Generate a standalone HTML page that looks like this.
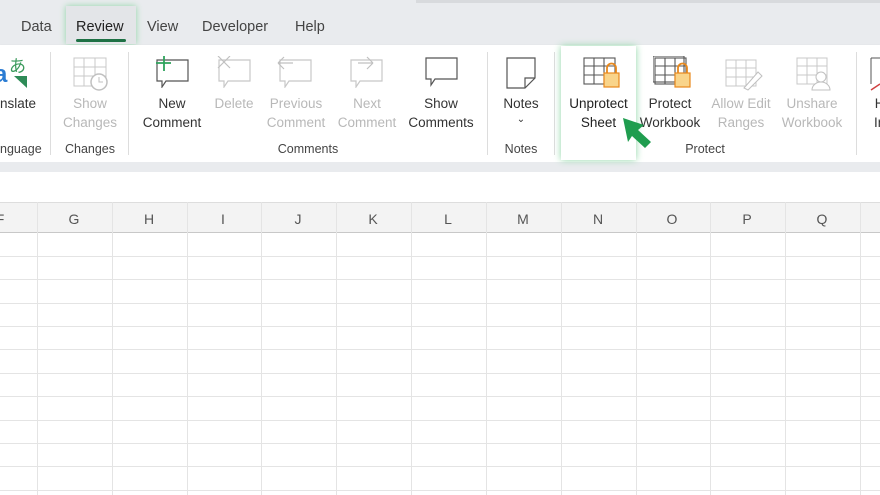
<!DOCTYPE html>
<html><head><style>
*{margin:0;padding:0;box-sizing:border-box}
body{width:880px;height:495px;overflow:hidden;background:#fff;font-family:"Liberation Sans",sans-serif;position:relative}
.top{position:absolute;left:0;top:0;width:880px;height:45px;background:#e9ebee}
.tab{position:absolute;top:19px;font-size:14.5px;color:#444}
.rib{position:absolute;left:0;top:45px;width:880px;height:117px;background:#fff;box-shadow:0 1px 2px #ccc}
.band{position:absolute;left:0;top:162px;width:880px;height:10px;background:#e9ebee}
.lbl{position:absolute;font-size:13.5px;color:#333;text-align:center;line-height:19px;white-space:nowrap}
.dis{color:#b8b8b8}
.grp{position:absolute;top:142px;font-size:12.5px;color:#444;text-align:center;white-space:nowrap}
.sep{position:absolute;top:52px;width:1px;height:103px;background:#ddd}
svg{position:absolute}
.hdr{position:absolute;left:0;top:202px;width:880px;height:31px;background:#f3f3f3;border-top:1px solid #ddd;border-bottom:1px solid #c8c8c8}
.col{position:absolute;top:211px;font-size:14px;color:#555;width:20px;text-align:center;margin-left:-10px}
</style></head><body>
<div class="top"></div>
<div style="position:absolute;left:416px;top:0;width:464px;height:3px;background:#d8dadd"></div>
<div style="position:absolute;left:66px;top:6px;width:70px;height:38px;background:#e3e5e8;box-shadow:0 0 6px #8fd6a6"></div>
<div class="tab" style="left:21px">Data</div>
<div class="tab" style="left:76px;color:#222">Review</div>
<div style="position:absolute;left:76px;top:39px;width:50px;height:3px;background:#1e7145;border-radius:2px"></div>
<div class="tab" style="left:147px">View</div>
<div class="tab" style="left:202px">Developer</div>
<div class="tab" style="left:295px">Help</div>
<div class="rib"></div>
<div class="band"></div>
<!-- translate icon -->
<svg style="left:0;top:55px" width="30" height="34"><text x="-6" y="27" font-size="24" font-weight="bold" fill="#2b7cd3" font-family="Liberation Sans">a</text><text x="9" y="17" font-size="17" fill="#3a9a5b" font-family="Noto Sans CJK JP">あ</text><path d="M14 21 L27 21 L27 33 Z" fill="#2e8b57"/></svg>
<div class="lbl" style="left:0;top:94px">nslate</div>
<div class="grp" style="left:0">nguage</div>
<div class="sep" style="left:50px"></div>
<!-- show changes -->
<svg style="left:72px;top:56px" width="40" height="36"><g stroke="#c8c8c8" fill="none"><rect x="2" y="2" width="32" height="28"/><path d="M2 11H34M2 20H34M12 2V30M23 2V30"/></g><circle cx="27" cy="26" r="8" fill="#fff" stroke="#c0c0c0" stroke-width="1.5"/><path d="M27 21V26H31" stroke="#c0c0c0" fill="none"/></svg>
<div class="lbl dis" style="left:62px;top:94px;width:56px">Show<br>Changes</div>
<div class="grp" style="left:62px;width:56px">Changes</div>
<div class="sep" style="left:128px"></div>
<!-- comments -->
<svg style="left:154px;top:56px" width="36" height="32"><path d="M3 4H34V25H12L8 31V25H3Z" fill="#fff" stroke="#555" stroke-width="1.2"/><path d="M10 0V15M2 7H17" stroke="#2ea35c" stroke-width="1.8"/></svg>
<div class="lbl" style="left:138px;top:94px;width:68px">New<br>Comment</div>
<svg style="left:216px;top:56px" width="36" height="32"><path d="M3 4H34V25H12L8 31V25H3Z" fill="#fff" stroke="#c8c8c8" stroke-width="1.2"/><path d="M2 0L14 12M14 0L2 12" stroke="#c0c0c0" stroke-width="1.2"/></svg>
<div class="lbl dis" style="left:208px;top:94px;width:52px">Delete</div>
<svg style="left:277px;top:56px" width="36" height="32"><path d="M3 4H34V25H12L8 31V25H3Z" fill="#fff" stroke="#c8c8c8" stroke-width="1.2"/><path d="M1 7H16M1 7L7 1M1 7L7 13" stroke="#c0c0c0" stroke-width="1.2" fill="none"/></svg>
<div class="lbl dis" style="left:264px;top:94px;width:64px">Previous<br>Comment</div>
<svg style="left:348px;top:56px" width="36" height="32"><path d="M3 4H34V25H12L8 31V25H3Z" fill="#fff" stroke="#c8c8c8" stroke-width="1.2"/><path d="M10 7H25M25 7L19 1M25 7L19 13" stroke="#c0c0c0" stroke-width="1.2" fill="none"/></svg>
<div class="lbl dis" style="left:334px;top:94px;width:66px">Next<br>Comment</div>
<svg style="left:424px;top:56px" width="36" height="32"><path d="M2 2H33V23H11L7 29V23H2Z" fill="#fff" stroke="#555" stroke-width="1.2"/></svg>
<div class="lbl" style="left:404px;top:94px;width:74px">Show<br>Comments</div>
<div class="grp" style="left:270px;width:76px">Comments</div>
<div class="sep" style="left:487px"></div>
<!-- notes -->
<svg style="left:505px;top:56px" width="34" height="34"><path d="M2 2H30V22L20 32H2Z" fill="#fff" stroke="#555" stroke-width="1.2"/><path d="M20 32V22H30" fill="none" stroke="#555" stroke-width="1.2"/></svg>
<div class="lbl" style="left:496px;top:94px;width:50px">Notes</div>
<div class="lbl" style="left:496px;top:110px;width:50px;font-size:10px">&#8964;</div>
<div class="grp" style="left:496px;width:50px">Notes</div>
<div class="sep" style="left:554px"></div>
<!-- unprotect highlight -->
<div style="position:absolute;left:561px;top:46px;width:75px;height:114px;background:#fff;box-shadow:0 0 7px #8fd6a6"></div>
<svg style="left:582px;top:56px" width="40" height="36"><g stroke="#555" fill="none" stroke-width="1.1"><rect x="2" y="2" width="31" height="26"/><path d="M2 10H33M2 19H33M12 2V28M22 2V28"/></g><rect x="22" y="17" width="15" height="14" fill="#f9d48a" stroke="#e8891d" stroke-width="1.2"/><path d="M25 17V12a4.5 4.5 0 0 1 9 0V17" fill="none" stroke="#e8891d" stroke-width="1.8"/></svg>
<div class="lbl" style="left:561px;top:94px;width:75px;color:#222">Unprotect<br>Sheet</div>
<svg style="left:653px;top:56px" width="40" height="36"><g stroke="#555" fill="none" stroke-width="1.1"><rect x="2" y="2" width="31" height="26"/><rect x="0" y="0" width="31" height="26"/><path d="M2 10H33M2 19H33M12 2V28M22 2V28"/></g><rect x="22" y="17" width="15" height="14" fill="#f9d48a" stroke="#e8891d" stroke-width="1.2"/><path d="M25 17V12a4.5 4.5 0 0 1 9 0V17" fill="none" stroke="#e8891d" stroke-width="1.8"/></svg>
<div class="lbl" style="left:636px;top:94px;width:68px">Protect<br>Workbook</div>
<svg style="left:724px;top:58px" width="40" height="34"><g stroke="#c8c8c8" fill="none"><rect x="2" y="2" width="30" height="26"/><path d="M2 10H32M2 19H32M12 2V28M22 2V28"/></g><path d="M20 30L34 14L38 18L24 32Z" fill="#fff" stroke="#c0c0c0"/></svg>
<div class="lbl dis" style="left:706px;top:94px;width:70px">Allow Edit<br>Ranges</div>
<svg style="left:795px;top:56px" width="40" height="36"><g stroke="#c8c8c8" fill="none"><rect x="2" y="2" width="30" height="26"/><path d="M2 10H32M2 19H32M12 2V28M22 2V28"/></g><circle cx="26" cy="21" r="5" fill="#fff" stroke="#c0c0c0"/><path d="M17 34a9 8 0 0 1 18 0Z" fill="#fff" stroke="#c0c0c0"/></svg>
<div class="lbl dis" style="left:776px;top:94px;width:72px">Unshare<br>Workbook</div>
<div class="grp" style="left:670px;width:70px">Protect</div>
<div class="sep" style="left:856px"></div>
<svg style="left:869px;top:56px" width="11" height="36"><path d="M2 2H11M2 2V28" stroke="#555" fill="none"/><path d="M2 34L11 28" stroke="#d04040" stroke-width="1.5"/></svg>
<div class="lbl" style="left:874px;top:94px">H<br>In</div>
<!-- arrow cursor -->
<svg style="left:620px;top:116px" width="34" height="34"><path d="M3 2L24 9L18 14L31 26L25 32L12 20L8 26Z" fill="#1f9d4f"/></svg>
<div style="position:absolute;left:0;top:172px;width:880px;height:30px;background:#fff"></div>
<div class="hdr"></div>
<div class="col" style="left:0">F</div>
<div class="col" style="left:74px">G</div>
<div class="col" style="left:149px">H</div>
<div class="col" style="left:223px">I</div>
<div class="col" style="left:298px">J</div>
<div class="col" style="left:373px">K</div>
<div class="col" style="left:448px">L</div>
<div class="col" style="left:523px">M</div>
<div class="col" style="left:598px">N</div>
<div class="col" style="left:672px">O</div>
<div class="col" style="left:747px">P</div>
<div class="col" style="left:822px">Q</div>
<svg style="left:0;top:202px" width="880" height="293">
<g stroke="#e4e4e4" stroke-width="1">
<path d="M37.5 0V293M112.5 0V293M187.5 0V293M261.5 0V293M336.5 0V293M411.5 0V293M486.5 0V293M561.5 0V293M636.5 0V293M710.5 0V293M785.5 0V293M860.5 0V293"/>
<path d="M0 54.5H880M0 77.5H880M0 101.5H880M0 124.5H880M0 147.5H880M0 171.5H880M0 194.5H880M0 218.5H880M0 241.5H880M0 264.5H880M0 288.5H880"/>
</g></svg>
</body></html>
